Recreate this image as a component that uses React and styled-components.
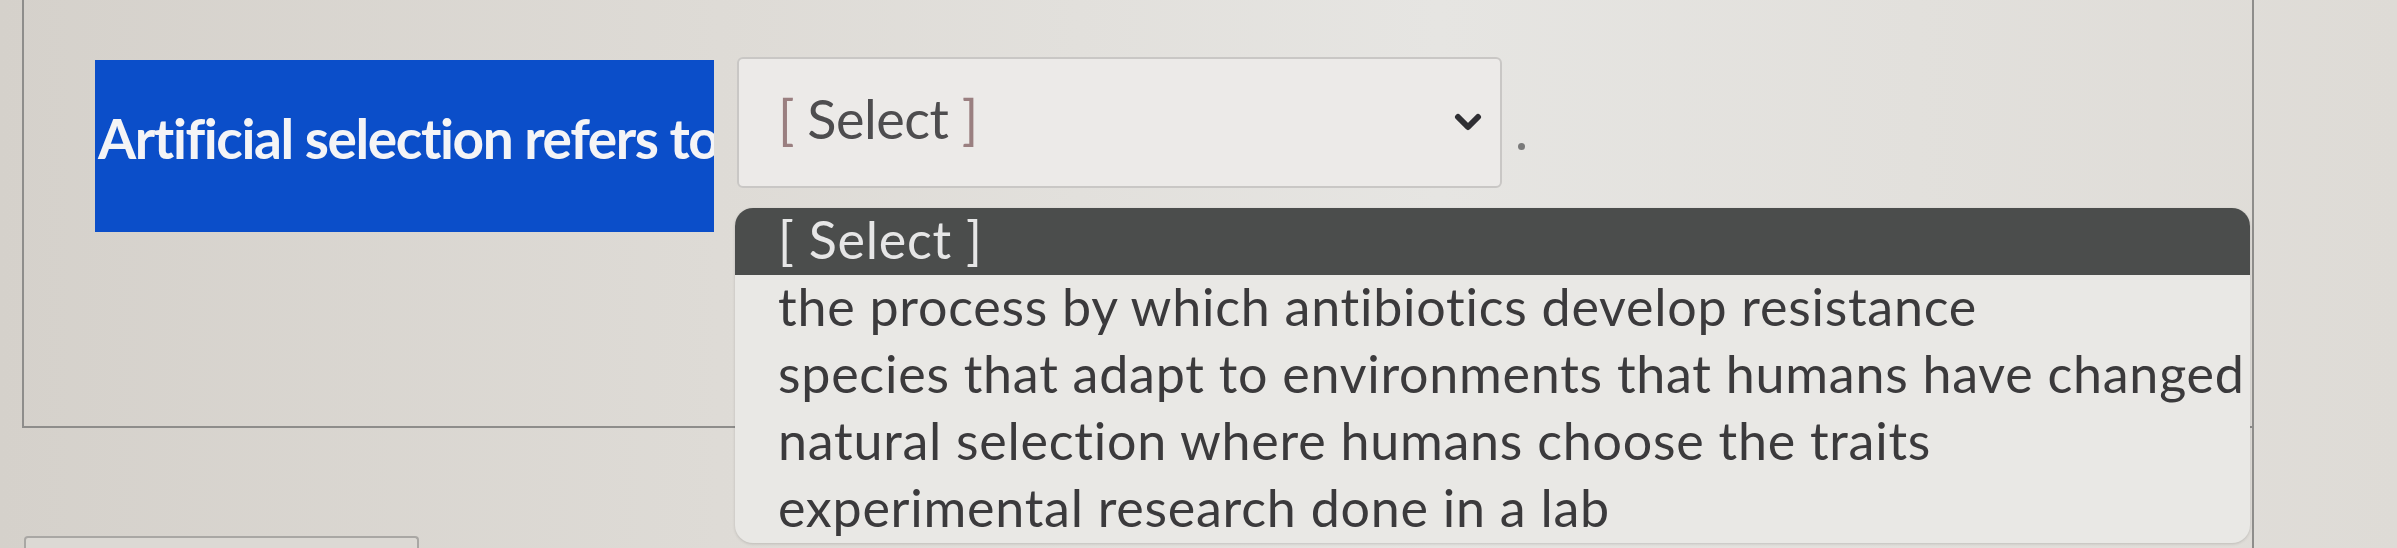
import React from 'react'
import styled, { createGlobalStyle } from 'styled-components'

const Global = createGlobalStyle`
  html, body {
    margin: 0;
    padding: 0;
  }
  body {
    font-family: Lato, "Open Sans", "Liberation Sans", sans-serif;
    background: linear-gradient(90deg, #d5d1cb 0%, #dedbd6 30%, #e6e5e2 60%, #dedbd6 100%);
    overflow: hidden;
  }
`

const Page = styled.div`
  width: 2397px;
  height: 548px;
  overflow: hidden;
`

const Frame = styled.div`
  width: 2254px;
  height: 548px;
  border-right: 2px solid #8e8d8b;
  box-sizing: border-box;
`

const Panel = styled.div`
  margin-left: 22px;
  height: 428px;
  border-left: 2px solid #8e8d8b;
  border-bottom: 2px solid #8e8d8b;
  box-sizing: border-box;
  padding: 57px 0 0 71px;
`

const QuestionRow = styled.div`
  display: flex;
  align-items: flex-start;
`

const Prompt = styled.div`
  margin-top: 3px;
  width: 619px;
  height: 172px;
  background: #0b4ec9;
  color: #f4f4f6;
  font-weight: 700;
  font-size: 55px;
  letter-spacing: -1.4px;
  white-space: nowrap;
  overflow: hidden;
  display: flex;
  align-items: center;
  padding: 0 0 16px 3px;
  box-sizing: border-box;
`

const SelectWrap = styled.div`
  position: relative;
  margin-left: 23px;
`

const SelectBox = styled.div`
  width: 765px;
  height: 131px;
  box-sizing: border-box;
  border: 2px solid #c9c7c5;
  border-radius: 6px;
  background: #eceae8;
  display: flex;
  align-items: center;
  justify-content: space-between;
  padding: 0 18px 8px 39px;
  color: #4e4d4f;
  font-size: 54px;
  letter-spacing: -0.5px;
`

const Bracket = styled.span`
  color: #9a7f80;
`

const Chevron = styled.svg`
  width: 28px;
  height: 20px;
  margin-top: 6px;
`

const Period = styled.span`
  margin: 86px 0 0 16px;
  width: 7px;
  height: 7px;
  border-radius: 50%;
  background: #7a7a7a;
`

const Menu = styled.ul`
  position: absolute;
  top: 151px;
  left: -2px;
  width: 1515px;
  margin: 0;
  padding: 0;
  list-style: none;
  background: #e9e8e5;
  border-radius: 18px;
  overflow: hidden;
  box-shadow: 0 1px 3px rgba(0, 0, 0, 0.15);
`

const Option = styled.li`
  height: 67px;
  line-height: 62px;
  padding-left: 43px;
  font-size: 52px;
  letter-spacing: 0.75px;
  white-space: nowrap;
  background: ${p => (p.$active ? '#4b4d4c' : 'transparent')};
  color: ${p => (p.$active ? '#e6e6e6' : '#3b3a3c')};
`

const PrevButton = styled.div`
  margin: 108px 0 0 24px;
  width: 391px;
  height: 20px;
  border: 2px solid #a9a7a4;
  border-bottom: none;
  border-radius: 4px 4px 0 0;
  background: #dcd9d4;
`

const options = [
  'the process by which antibiotics develop resistance',
  'species that adapt to environments that humans have changed',
  'natural selection where humans choose the traits',
  'experimental research done in a lab',
]

const App = () => {
  return (
    <Page>
      <Global />
      <Frame>
        <Panel>
          <QuestionRow>
            <Prompt>Artificial selection refers to</Prompt>
            <SelectWrap>
              <SelectBox>
                <span>
                  <Bracket>[</Bracket> Select <Bracket>]</Bracket>
                </span>
                <Chevron viewBox="0 0 28 20">
                  <path d="M4 5 L14 15 L24 5" fill="none" stroke="#2f2f33" strokeWidth="6" strokeLinecap="round" strokeLinejoin="round" />
                </Chevron>
              </SelectBox>
              <Menu>
                <Option $active>[ Select ]</Option>
                {options.map(o => (
                  <Option key={o}>{o}</Option>
                ))}
              </Menu>
            </SelectWrap>
            <Period />
          </QuestionRow>
        </Panel>
        <PrevButton />
      </Frame>
    </Page>
  )
}

export default App
